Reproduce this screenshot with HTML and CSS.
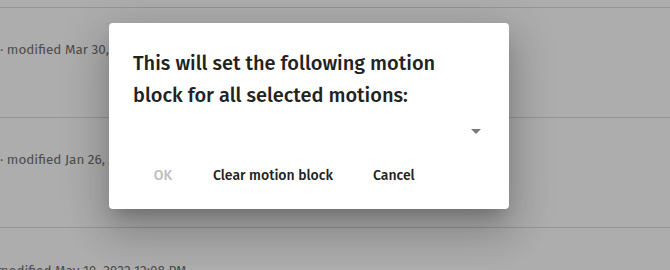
FILE: index.html
```html
<!DOCTYPE html>
<html>
<head>
<meta charset="utf-8">
<link rel="stylesheet" href="styles.css">
</head>
<body>
<div class="list">
  <div class="row"><span class="meta">· modified Mar 30, 2022 10:14 AM</span></div>
  <div class="row"><span class="meta">· modified Jan 26, 2022 3:41 PM</span></div>
  <div class="row row-last"><span class="meta meta-shift">modified May 10, 2022 12:08 PM</span></div>
</div>
<div class="backdrop"></div>
<div class="dialog">
  <h2 class="dialog-title">This will set the following motion block for all selected motions:</h2>
  <div class="select-field">
    <span class="select-arrow"></span>
  </div>
  <div class="dialog-actions">
    <button class="btn btn-disabled" disabled>OK</button>
    <button class="btn">Clear motion block</button>
    <button class="btn">Cancel</button>
  </div>
</div>
</body>
</html>
```
FILE: styles.css
```css
html, body {
  margin: 0;
  padding: 0;
  width: 670px;
  height: 270px;
  overflow: hidden;
  background: #fff;
  font-family: "Fira Sans", Lato, sans-serif;
}
.list {
  padding-top: 7px;
}
.row {
  height: 109px;
  border-top: 1px solid #dcdcdc;
  display: flex;
  align-items: flex-start;
}
.meta {
  font-size: 13.5px;
  line-height: 16px;
  color: #727272;
  white-space: nowrap;
  margin-top: 34px;
}
.row-last .meta {
  margin-top: 35px;
}
.meta-shift {
  margin-left: -3px;
}
.backdrop {
  position: absolute;
  inset: 0;
  background: rgba(0, 0, 0, 0.32);
}
.dialog {
  position: absolute;
  left: 109px;
  top: 23px;
  width: 400px;
  box-sizing: border-box;
  padding: 24px 24px 16px;
  background: #fff;
  border-radius: 4px;
  box-shadow: 0 11px 15px -7px rgba(0,0,0,.2), 0 24px 38px 3px rgba(0,0,0,.14), 0 9px 46px 8px rgba(0,0,0,.12);
}
.dialog-title {
  margin: 0;
  font-size: 20px;
  font-weight: 500;
  line-height: 32px;
  color: #222;
  padding-right: 40px;
}
.select-field {
  height: 40px;
  display: flex;
  align-items: center;
  justify-content: flex-end;
  padding-right: 4px;
}
.select-arrow {
  width: 0;
  height: 0;
  border-left: 5px solid transparent;
  border-right: 5px solid transparent;
  border-top: 5px solid #7a7a7a;
}
.dialog-actions {
  display: flex;
  gap: 8px;
  margin-top: 6px;
}
.btn {
  height: 36px;
  min-width: 60px;
  padding: 0 16px;
  border: 0;
  background: transparent;
  font-family: "Fira Sans", Lato, sans-serif;
  font-size: 14px;
  font-weight: 500;
  color: #222;
  cursor: pointer;
  border-radius: 4px;
}
.btn-disabled {
  color: #bdbdbd;
  cursor: default;
  margin-right: -4px;
}
```
